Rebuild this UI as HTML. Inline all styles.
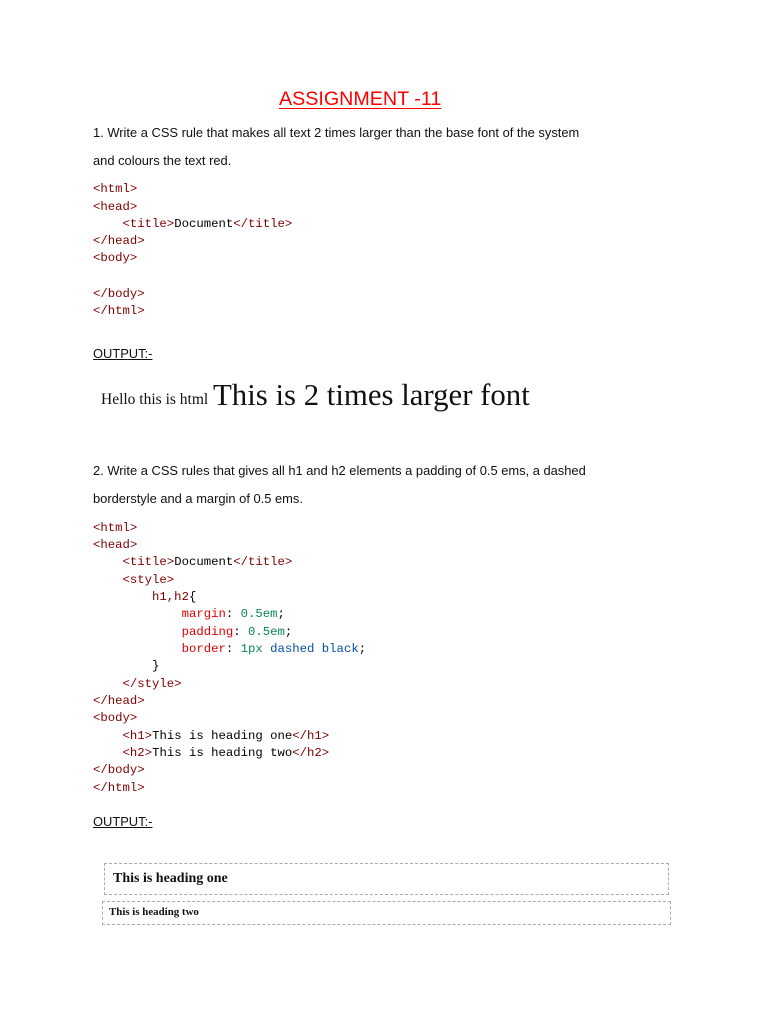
<!DOCTYPE html>
<html><head><meta charset="utf-8"><style>
body{margin:0;width:768px;height:1024px;background:#fff;position:relative;overflow:hidden}
.a{position:absolute;white-space:pre;line-height:1}
.t{font-family:"Liberation Sans",sans-serif;font-size:12.9px;color:#111}
.c{font-family:"Liberation Mono",monospace;font-size:12.3px;color:#000}
.r{color:#800000}.p{color:#e50000}.g{color:#098658}.b{color:#0451a5}
</style></head><body>
<div class="a" style="left:279px;top:90px;font-family:'Liberation Sans',sans-serif;font-size:19.7px;color:#f00;text-decoration:underline;text-decoration-thickness:1px;text-underline-offset:3px">ASSIGNMENT -11</div>
<div class="a t" style="left:93px;top:127px">1. Write a CSS rule that makes all text 2 times larger than the base font of the system</div>
<div class="a t" style="left:93px;top:155px">and colours the text red.</div>
<div class="a c" style="left:93px;top:183px"><span class="r">&lt;html&gt;</span></div>
<div class="a c" style="left:93px;top:201px"><span class="r">&lt;head&gt;</span></div>
<div class="a c" style="left:93px;top:218px">    <span class="r">&lt;title&gt;</span>Document<span class="r">&lt;/title&gt;</span></div>
<div class="a c" style="left:93px;top:235px"><span class="r">&lt;/head&gt;</span></div>
<div class="a c" style="left:93px;top:252px"><span class="r">&lt;body&gt;</span></div>
<div class="a c" style="left:93px;top:288px"><span class="r">&lt;/body&gt;</span></div>
<div class="a c" style="left:93px;top:305px"><span class="r">&lt;/html&gt;</span></div>
<div class="a t" style="left:93px;top:348px;text-decoration:underline">OUTPUT:-</div>
<div class="a" style="left:101px;top:392px;font-family:'Liberation Serif',serif;font-size:15.5px;color:#111">Hello this is html</div>
<div class="a" style="left:213px;top:380px;font-family:'Liberation Serif',serif;font-size:30.8px;color:#111">This is 2 times larger font</div>
<div class="a t" style="left:93px;top:465px">2. Write a CSS rules that gives all h1 and h2 elements a padding of 0.5 ems, a dashed</div>
<div class="a t" style="left:93px;top:493px">borderstyle and a margin of 0.5 ems.</div>
<div class="a c" style="left:93px;top:522px"><span class="r">&lt;html&gt;</span></div>
<div class="a c" style="left:93px;top:539px"><span class="r">&lt;head&gt;</span></div>
<div class="a c" style="left:93px;top:556px">    <span class="r">&lt;title&gt;</span>Document<span class="r">&lt;/title&gt;</span></div>
<div class="a c" style="left:93px;top:574px">    <span class="r">&lt;style&gt;</span></div>
<div class="a c" style="left:93px;top:591px">        <span class="r">h1,h2</span>{</div>
<div class="a c" style="left:93px;top:608px">            <span class="p">margin</span>: <span class="g">0.5em</span>;</div>
<div class="a c" style="left:93px;top:626px">            <span class="p">padding</span>: <span class="g">0.5em</span>;</div>
<div class="a c" style="left:93px;top:643px">            <span class="p">border</span>: <span class="g">1px</span> <span class="b">dashed black</span>;</div>
<div class="a c" style="left:93px;top:660px">        }</div>
<div class="a c" style="left:93px;top:678px">    <span class="r">&lt;/style&gt;</span></div>
<div class="a c" style="left:93px;top:695px"><span class="r">&lt;/head&gt;</span></div>
<div class="a c" style="left:93px;top:712px"><span class="r">&lt;body&gt;</span></div>
<div class="a c" style="left:93px;top:730px">    <span class="r">&lt;h1&gt;</span>This is heading one<span class="r">&lt;/h1&gt;</span></div>
<div class="a c" style="left:93px;top:747px">    <span class="r">&lt;h2&gt;</span>This is heading two<span class="r">&lt;/h2&gt;</span></div>
<div class="a c" style="left:93px;top:764px"><span class="r">&lt;/body&gt;</span></div>
<div class="a c" style="left:93px;top:782px"><span class="r">&lt;/html&gt;</span></div>
<div class="a t" style="left:93px;top:816px;text-decoration:underline">OUTPUT:-</div>
<div style="position:absolute;left:104px;top:863px;width:563px;height:30px;border:1px dashed #aaa"></div>
<div class="a" style="left:113px;top:872px;font-family:'Liberation Serif',serif;font-weight:bold;font-size:14px;color:#111">This is heading one</div>
<div style="position:absolute;left:102px;top:901px;width:567px;height:22px;border:1px dashed #aaa"></div>
<div class="a" style="left:109px;top:907px;font-family:'Liberation Serif',serif;font-weight:bold;font-size:10.9px;color:#111">This is heading two</div>
</body></html>
